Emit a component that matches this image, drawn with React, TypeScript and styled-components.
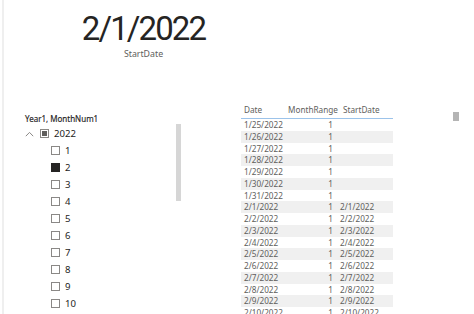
import styled, { createGlobalStyle } from "styled-components";

const GlobalStyle = createGlobalStyle`
  html, body {
    margin: 0;
    padding: 0;
    background: #ffffff;
    overflow: hidden;
  }
  * { box-sizing: border-box; }
`;

const months = ["1", "2", "3", "4", "5", "6", "7", "8", "9", "10"];

const rows = [
  ["1/25/2022", "1", ""],
  ["1/26/2022", "1", ""],
  ["1/27/2022", "1", ""],
  ["1/28/2022", "1", ""],
  ["1/29/2022", "1", ""],
  ["1/30/2022", "1", ""],
  ["1/31/2022", "1", ""],
  ["2/1/2022", "1", "2/1/2022"],
  ["2/2/2022", "1", "2/2/2022"],
  ["2/3/2022", "1", "2/3/2022"],
  ["2/4/2022", "1", "2/4/2022"],
  ["2/5/2022", "1", "2/5/2022"],
  ["2/6/2022", "1", "2/6/2022"],
  ["2/7/2022", "1", "2/7/2022"],
  ["2/8/2022", "1", "2/8/2022"],
  ["2/9/2022", "1", "2/9/2022"],
  ["2/10/2022", "1", "2/10/2022"],
];

export default function App() {
  return (
    <>
      <GlobalStyle />
      <Page>
        <Card>
          <BigValue>2/1/2022</BigValue>
          <CardLabel>StartDate</CardLabel>
        </Card>
        <Visuals>
          <Slicer>
            <SlicerList>
              <SlicerHeader>Year1, MonthNum1</SlicerHeader>
              <SlicerRow $indent={0}>
                <Chevron width="9" height="6" viewBox="0 0 9 6">
                  <path d="M0.8 5.2 L4.5 1.4 L8.2 5.2" fill="none" stroke="#8a8886" strokeWidth="1" />
                </Chevron>
                <Box $checked={false}>
                  <Partial />
                </Box>
                <ItemText>2022</ItemText>
              </SlicerRow>
              {months.map((m) => (
                <SlicerRow key={m} $indent={26}>
                  <Box $checked={m === "2"} />
                  <ItemText>{m}</ItemText>
                </SlicerRow>
              ))}
            </SlicerList>
            <ScrollTrack>
              <SlicerThumb />
            </ScrollTrack>
          </Slicer>
          <TableVisual>
            <Table>
              <HeaderRow>
                <DateCell>Date</DateCell>
                <RangeHead>MonthRange</RangeHead>
                <StartCell>StartDate</StartCell>
              </HeaderRow>
              {rows.map((r, i) => (
                <BodyRow key={r[0]} $shaded={i % 2 === 1}>
                  <DateCell>{r[0]}</DateCell>
                  <RangeCell>{r[1]}</RangeCell>
                  <StartCell>{r[2]}</StartCell>
                </BodyRow>
              ))}
            </Table>
            <TableScroll>
              <TableThumb />
            </TableScroll>
          </TableVisual>
        </Visuals>
      </Page>
    </>
  );
}

const Page = styled.div`
  width: 472px;
  height: 314px;
  margin-left: 2px;
  border-left: 2px solid #efefef;
  display: flex;
  flex-direction: column;
  overflow: hidden;
`;

const Card = styled.div`
  width: 279px;
  height: 103px;
  flex-shrink: 0;
  padding-top: 12px;
  display: flex;
  flex-direction: column;
  align-items: center;
`;

const BigValue = styled.div`
  font-family: Roboto, "Liberation Sans", sans-serif;
  font-size: 33px;
  line-height: 1;
  letter-spacing: -1.9px;
  color: #252423;
`;

const CardLabel = styled.div`
  margin-top: 3px;
  font-family: "Noto Sans", "Open Sans", sans-serif;
  font-size: 8.8px;
  line-height: 12px;
  color: #605e5c;
`;

const Visuals = styled.div`
  display: flex;
  align-items: flex-start;
  flex: 1;
  min-height: 0;
`;

const Slicer = styled.div`
  width: 237px;
  flex-shrink: 0;
  display: flex;
  padding-top: 10px;
  padding-left: 21px;
`;

const SlicerList = styled.div`
  width: 150px;
  display: flex;
  flex-direction: column;
`;

const SlicerHeader = styled.div`
  font-family: "Noto Sans", "Open Sans", sans-serif;
  font-size: 8px;
  font-weight: 400;
  line-height: 12px;
  color: #252423;
  -webkit-text-stroke: 0.15px #252423;
`;

const SlicerRow = styled.div<{ $indent: number }>`
  height: 17px;
  flex-shrink: 0;
  display: flex;
  align-items: center;
  padding-left: ${(p) => p.$indent}px;
`;

const Chevron = styled.svg`
  margin-right: 6px;
`;

const Box = styled.div<{ $checked: boolean }>`
  width: 9px;
  height: 9px;
  border: 1px solid ${(p) => (p.$checked ? "#252423" : "#8a8886")};
  background: ${(p) => (p.$checked ? "#252423" : "#ffffff")};
  display: flex;
  align-items: center;
  justify-content: center;
`;

const Partial = styled.div`
  width: 5px;
  height: 5px;
  background: #605e5c;
`;

const ItemText = styled.span`
  margin-left: 5px;
  font-family: "Noto Sans", "Open Sans", sans-serif;
  font-size: 9.6px;
  color: #252423;
`;

const ScrollTrack = styled.div`
  padding-top: 11px;
  margin-left: 1px;
`;

const SlicerThumb = styled.div`
  width: 5px;
  height: 77px;
  background: #d6d6d6;
`;

const TableVisual = styled.div`
  flex: 1;
  display: flex;
  justify-content: space-between;
  align-items: flex-start;
  padding-right: 15px;
`;

const Table = styled.div`
  width: 152px;
  flex-shrink: 0;
  display: flex;
  flex-direction: column;
  font-family: "Noto Sans", "Open Sans", sans-serif;
  font-size: 8.2px;
  color: #605e5c;
`;

const HeaderRow = styled.div`
  height: 16px;
  flex-shrink: 0;
  display: flex;
  line-height: 13px;
  border-bottom: 1px solid #9cc3ea;
`;

const BodyRow = styled.div<{ $shaded: boolean }>`
  height: 11.75px;
  flex-shrink: 0;
  line-height: 11.75px;
  display: flex;
  white-space: nowrap;
  background: ${(p) => (p.$shaded ? "#f0f0f0" : "transparent")};
`;

const DateCell = styled.div`
  width: 47px;
  padding-left: 3px;
`;

const RangeHead = styled.div`
  width: 50px;
`;

const RangeCell = styled.div`
  width: 47px;
  text-align: right;
  padding-right: 2px;
`;

const StartCell = styled.div`
  flex: 1;
  padding-left: 5px;
`;

const TableScroll = styled.div`
  width: 6px;
  flex-shrink: 0;
  padding-top: 9px;
`;

const TableThumb = styled.div`
  width: 6px;
  height: 9px;
  background: #b4b4b4;
`;
